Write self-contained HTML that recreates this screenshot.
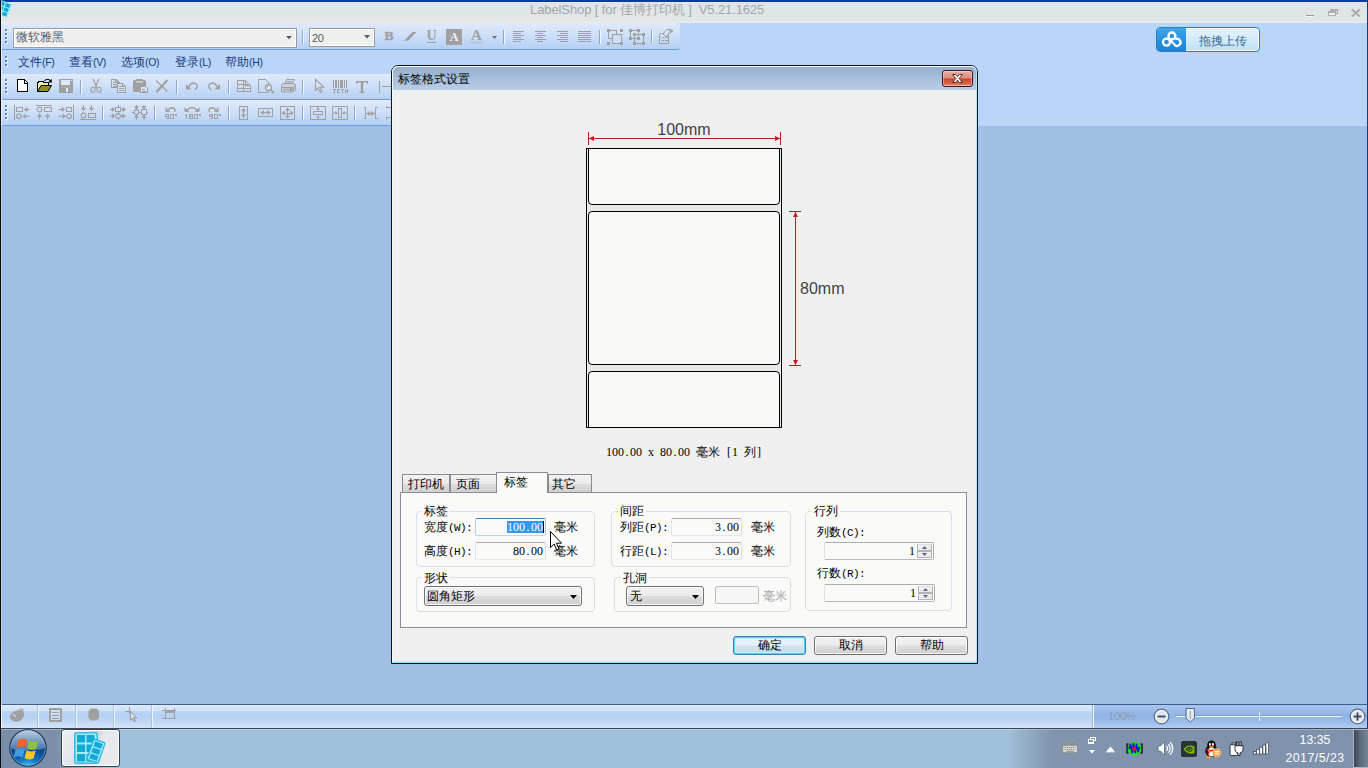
<!DOCTYPE html>
<html><head><meta charset="utf-8"><title>LabelShop</title>
<style>
*{box-sizing:border-box;margin:0;padding:0}
html,body{width:1368px;height:768px;overflow:hidden}
body{position:relative;background:#a0bee6;font-family:"Liberation Sans",sans-serif;font-size:12px;color:#000}
.abs{position:absolute}
svg{position:absolute;overflow:visible}
/* app frame */
#topline{left:0;top:0;width:1368px;height:2px;background:#0b3c98}
#titlebar{left:0;top:2px;width:1368px;height:21px;background:linear-gradient(#e4ecf6 0,#dfe4e9 6%,#e0e5e8 50%,#e3e7e6 92%,#eaeef1 100%)}
#title{left:530px;top:2px;width:240px;height:16px;line-height:15px;font-size:13px;letter-spacing:-.1px;color:#a3a7ab;white-space:nowrap}
#dock{left:0;top:23px;width:1368px;height:103px;background:#b9d6f8}
#lborder{left:0;top:0;width:1px;height:768px;background:#0c0e14}
#lborder2{left:1px;top:2px;width:1px;height:726px;background:linear-gradient(rgba(255,255,255,.6) 0,rgba(255,255,255,.6) 124px,rgba(255,255,255,.22) 124px,rgba(255,255,255,.22) 702px,rgba(255,255,255,.8) 702px)}
#rborder{left:1367px;top:0;width:1px;height:728px;background:#1d3d70}
.tb{position:absolute;left:2px;height:26px;background:linear-gradient(#dfeafa,#cfe0f8 45%,#b5d0f5);border-bottom:1px solid #6f9fe0}
.grip{position:absolute;left:3px;width:3px;height:15px}
.grip i{position:absolute;left:0;width:2px;height:2px;background:#5b79ad;box-shadow:1px 1px 0 #fff}
.sep{position:absolute;width:2px;height:16px;border-left:1px solid #8aa6cf;border-right:1px solid #f4f8fe}
/* status bar */
#status{left:0;top:704px;width:1368px;height:24px;border-top:1px solid #3f5c8c;background:linear-gradient(#ebf4fd 0,#d7e6fa 6%,#d0e2f9 24%,#b9d4f5 29%,#b5d1f3 50%,#c3d9f5 75%,#d4e4f8 100%)}
#statusR{left:1094px;top:705px;width:273px;height:23px;background:linear-gradient(#a9c7f0 0,#8fb3e6 45%,#9dbdec 75%,#b2cdf2)}
/* taskbar */
#taskbar{left:0;top:728px;width:1368px;height:40px;border-top:1px solid #39465a;background:linear-gradient(90deg,#798da7 0,#7b8fa9 55px,#a0bfd8 100px,#a0bfd8 1009px,#8094ad 1051px,#7e92ac 1368px)}
/* dialog */
#dlg{left:391px;top:65px;width:587px;height:599px;background:#f0f0f0;border:1px solid #0c1620;border-radius:7px 7px 0 0}
.t12{font-size:12px;line-height:14px;white-space:nowrap;position:absolute}

.tab{top:474px;height:19px;border:1px solid #898c95;border-bottom:none;background:linear-gradient(#f2f2f2,#ebebeb 48%,#dddddd 52%,#cfcfcf)}
.gb{border:1px solid #d5dfe5;border-radius:4px}
.gl{background:#fafbf9;padding:0 2px}
.mn{font-family:"Liberation Mono",monospace;font-size:11px;letter-spacing:-.6px}
.nm{font-family:"Liberation Serif",serif;font-size:12px}
.nm i{display:inline-block;width:6px;text-align:center;font-style:normal}
.nm b{display:inline-block;width:6px;text-align:center;font-weight:normal}
.cj{font-family:"Liberation Sans",sans-serif}
.w2{display:inline-block;width:24px;white-space:nowrap}
.w1{display:inline-block;width:12px;white-space:nowrap}
.inp{border:1px solid;border-color:#abadb3 #dbdfe6 #e3e9ef #e2e3ea;border-radius:2px;background:#fafbf9}
.dd{border:1px solid #707070;border-radius:3px;background:linear-gradient(#f2f2f2,#ebebeb 48%,#dddddd 52%,#cfcfcf);box-shadow:inset 0 0 0 1px rgba(255,255,255,.8)}
.spin{width:15px;height:14px;border:1px solid #b3b6ba;border-top-color:#dcdee0;background:linear-gradient(#f3f3f3,#e7e7e7 45%,#efefef 55%,#e9e9e9)}
.spin b{position:absolute;left:0;top:5px;width:13px;height:2px;background:#b4b4b4}
.btn{width:73px;height:19px;border:1px solid #707070;border-radius:3px;background:linear-gradient(#f2f2f2,#ebebeb 48%,#dddddd 52%,#cfcfcf);box-shadow:inset 0 0 0 1px rgba(255,255,255,.8);text-align:center;line-height:17px;font-size:12px}

/*TBCSS*/
.gd{position:absolute;left:0;width:2px;height:2px;background:#6482b4;box-shadow:1px 1px 0 #f2f7fe}
.cb{border:1px solid #9b9b9b;background:#f0f0f0;box-shadow:inset 0 0 0 1px #fff}
.mi{color:#17397c;font-size:12px;letter-spacing:0}
.mi span{font-size:10.500px;letter-spacing:-.35px}
.mi b{font-weight:normal}
/*/TBCSS*/
</style></head>
<body>
<div class="abs" id="topline"></div>
<div class="abs" id="titlebar"></div>
<div class="abs" id="title">LabelShop [ for <span style="display:inline-block;width:64.500px">佳博打印机</span> ]&nbsp; V5.21.1625</div>
<div class="abs" id="dock"></div>
<!--FONTBAR-->
<div class="tb" style="top:23px;width:678px;height:27px;border-radius:0 3px 3px 0"></div>
<div class="abs" style="left:5px;top:29px;width:3px;height:15px"><i class="gd" style="top:0px"></i><i class="gd" style="top:4px"></i><i class="gd" style="top:8px"></i><i class="gd" style="top:12px"></i></div>
<div class="abs cb" style="left:13px;top:28px;width:284px;height:20px"></div>
<div class="t12" style="left:16px;top:30px;color:#5e5e5e;font-size:12px">微软雅黑</div>
<svg style="left:286px;top:36px" width="6" height="4" viewBox="0 0 6 4" ><path d="M0 0h6l-3 3.300z" fill="#5c5c5c"/></svg>
<div class="sep" style="left:302px;top:30px;height:14px"></div>
<div class="abs cb" style="left:309px;top:28px;width:66px;height:19px"></div>
<div class="t12" style="left:312px;top:31px;color:#5a5a5a;font-size:11px;letter-spacing:-.3px">20</div>
<svg style="left:364px;top:35px" width="6" height="4" viewBox="0 0 6 4" ><path d="M0 0h6l-3 3.500z" fill="#5c5c5c"/></svg>
<div class="abs" style="left:384.500px;top:28px;width:12px;height:16px;font-family:'Liberation Serif',serif;font-weight:bold;font-size:13.500px;line-height:16px;color:#a0a0a0;-webkit-text-stroke:.5px #a0a0a0">B</div>
<svg style="left:401px;top:28px" width="16" height="16" viewBox="0 0 16 16" ><path d="M3 12.700h4.200l8-8.500v-.2h-3.700z" fill="#a0a0a0"/></svg>
<div class="abs" style="left:426.500px;top:28px;width:12px;height:16px;font-family:'Liberation Serif',serif;font-weight:bold;font-size:14px;line-height:16px;color:#a0a0a0">U</div>
<div class="abs" style="left:427px;top:42px;width:9px;height:1px;background:#a0a0a0"></div>
<div class="abs" style="left:446px;top:29px;width:16px;height:16px;background:#a0a0a0"></div>
<div class="abs" style="left:446px;top:30px;width:16px;height:14px;text-align:center;font-family:'Liberation Serif',serif;font-weight:bold;font-size:12px;line-height:14px;color:#eef3fb">A</div>
<div class="abs" style="left:468px;top:26px;width:17px;height:18px;text-align:center;font-family:'Liberation Serif',serif;font-weight:bold;font-size:15px;line-height:18px;color:#a0a0a0">A</div>
<div class="abs" style="left:470px;top:41px;width:13px;height:3px;background:linear-gradient(#b9c6da,#bccce4);border-radius:1px"></div>
<svg style="left:492px;top:36px" width="5" height="3" viewBox="0 0 5 3" ><path d="M0 0h5l-2.500 3z" fill="#707070"/></svg>
<div class="sep" style="left:503px;top:30px;height:14px"></div>
<svg style="left:513px;top:31px" width="13" height="12" viewBox="0 0 13 12" shape-rendering="crispEdges"><rect x="0" y="0" width="11" height="1" fill="#a0a0a0"/><rect x="0" y="2" width="8" height="1" fill="#a0a0a0"/><rect x="0" y="4" width="11" height="1" fill="#a0a0a0"/><rect x="0" y="6" width="8" height="1" fill="#a0a0a0"/><rect x="0" y="8" width="11" height="1" fill="#a0a0a0"/><rect x="0" y="10" width="8" height="1" fill="#a0a0a0"/></svg>
<svg style="left:535px;top:31px" width="13" height="12" viewBox="0 0 13 12" shape-rendering="crispEdges"><rect x="0" y="0" width="11" height="1" fill="#a0a0a0"/><rect x="2" y="2" width="6" height="1" fill="#a0a0a0"/><rect x="0" y="4" width="11" height="1" fill="#a0a0a0"/><rect x="2" y="6" width="6" height="1" fill="#a0a0a0"/><rect x="0" y="8" width="11" height="1" fill="#a0a0a0"/><rect x="2" y="10" width="6" height="1" fill="#a0a0a0"/></svg>
<svg style="left:557px;top:31px" width="13" height="12" viewBox="0 0 13 12" shape-rendering="crispEdges"><rect x="0" y="0" width="11" height="1" fill="#a0a0a0"/><rect x="3" y="2" width="8" height="1" fill="#a0a0a0"/><rect x="0" y="4" width="11" height="1" fill="#a0a0a0"/><rect x="3" y="6" width="8" height="1" fill="#a0a0a0"/><rect x="0" y="8" width="11" height="1" fill="#a0a0a0"/><rect x="3" y="10" width="8" height="1" fill="#a0a0a0"/></svg>
<svg style="left:578px;top:31px" width="13" height="12" viewBox="0 0 13 12" shape-rendering="crispEdges"><rect x="0" y="0" width="13" height="1" fill="#a0a0a0"/><rect x="0" y="2" width="13" height="1" fill="#a0a0a0"/><rect x="0" y="4" width="13" height="1" fill="#a0a0a0"/><rect x="0" y="6" width="13" height="1" fill="#a0a0a0"/><rect x="0" y="8" width="13" height="1" fill="#a0a0a0"/><rect x="0" y="10" width="13" height="1" fill="#a0a0a0"/></svg>
<div class="sep" style="left:599px;top:30px;height:14px"></div>
<svg style="left:607px;top:29px" width="16" height="16" viewBox="0 0 16 16" ><g fill="none" stroke="#a0a0a0" stroke-width="1" shape-rendering="crispEdges"><path d="M1.500 1.500h8v8h-8z"/><path d="M5.500 5.500h9v9h-9z" fill="#cddef6"/></g><rect x="0" y="0" width="3" height="3" fill="#a0a0a0"/><rect x="13" y="0" width="3" height="3" fill="#a0a0a0"/><rect x="0" y="13" width="3" height="3" fill="#a0a0a0"/><rect x="13" y="13" width="3" height="3" fill="#a0a0a0"/><rect x="2" y="2" width="7" height="7" fill="none"/></svg>
<svg style="left:629px;top:29px" width="16" height="16" viewBox="0 0 16 16" ><g fill="none" stroke="#a0a0a0" stroke-width="1" shape-rendering="crispEdges"><path d="M1.500 1.500h8v8h-8zM5.500 5.500h9v9h-9z"/></g><rect x="0" y="0" width="3" height="3" fill="#a0a0a0"/><rect x="8" y="0" width="3" height="3" fill="#a0a0a0"/><rect x="0" y="8" width="3" height="3" fill="#a0a0a0"/><rect x="4" y="4" width="3" height="3" fill="#a0a0a0"/><rect x="13" y="4" width="3" height="3" fill="#a0a0a0"/><rect x="4" y="13" width="3" height="3" fill="#a0a0a0"/><rect x="13" y="13" width="3" height="3" fill="#a0a0a0"/><rect x="8" y="8" width="3" height="3" fill="#a0a0a0"/></svg>
<div class="sep" style="left:651px;top:30px;height:14px"></div>
<svg style="left:658px;top:28px" width="16" height="16" viewBox="0 0 16 16" ><g fill="none" stroke="#a0a0a0" stroke-width="1" shape-rendering="crispEdges"><path d="M1.500 5.500h4M9.500 5.500h1v10h-9v-10M3.500 9.500h2M6.500 9.500h3M3.500 12.500h2M6.500 12.500h3"/></g><path d="M5 6l4-4.500 3 0 .0 3-4 4.500z" fill="none" stroke="#a0a0a0"/><path d="M12 .5l3.500 2.500-3.500 2.500z" fill="#a0a0a0"/></svg>
<!--/FONTBAR-->
<!--MENUBAR-->
<div class="abs" style="left:5px;top:56px;width:3px;height:11px"><i class="gd" style="top:0px"></i><i class="gd" style="top:4px"></i><i class="gd" style="top:8px"></i></div>
<div class="t12 mi" style="left:18px;top:55px"><b class="w2">文件</b><span>(F)</span></div>
<div class="t12 mi" style="left:69px;top:55px"><b class="w2">查看</b><span>(V)</span></div>
<div class="t12 mi" style="left:121px;top:55px"><b class="w2">选项</b><span>(O)</span></div>
<div class="t12 mi" style="left:175px;top:55px"><b class="w2">登录</b><span>(L)</span></div>
<div class="t12 mi" style="left:225px;top:55px"><b class="w2">帮助</b><span>(H)</span></div>
<!--/MENUBAR-->
<!--TOOLBAR1-->
<div class="tb" style="top:74px;width:700px"></div>
<div class="abs" style="left:5px;top:79px;width:3px;height:15px"><i class="gd" style="top:0px"></i><i class="gd" style="top:4px"></i><i class="gd" style="top:8px"></i><i class="gd" style="top:12px"></i></div>
<svg style="left:14px;top:78px" width="16" height="16" viewBox="0 0 16 16" ><path d="M3.500 1.500h7l3 3v9h-10z" fill="#fff" stroke="#000" shape-rendering="crispEdges"/><path d="M10.500 1.500v3.500h3.500" fill="none" stroke="#000" shape-rendering="crispEdges"/><path d="M10.500 1.500l3 3" stroke="#000" fill="none"/></svg>
<svg style="left:36px;top:78px" width="16" height="16" viewBox="0 0 16 16" ><path d="M1.500 13.500v-9.500h1l1-1h3l1 1h5v3.500" fill="#f4ef9c" stroke="#000" shape-rendering="crispEdges"/><path d="M1.500 13.500l3.500-6h10.500l-3.500 6z" fill="#8f8d20" stroke="#000" stroke-linejoin="round"/><path d="M8.500 3c1.500-2.300 4.500-2.300 5.800 0" fill="none" stroke="#000" stroke-width="1.100"/><path d="M15.800 .8v3.800h-3.800z" fill="#000"/></svg>
<svg style="left:58px;top:78px" width="16" height="16" viewBox="0 0 16 16" shape-rendering="crispEdges"><path d="M1 1h14v14h-14z" fill="#a0a0a0"/><rect x="3" y="2" width="9" height="5" fill="#dfe8f6"/><rect x="13" y="2" width="1" height="1" fill="#dfe8f6"/><rect x="8" y="10" width="2" height="4" fill="#dfe8f6"/><rect x="3" y="9" width="9" height="1" fill="#adadad"/></svg>
<div class="sep" style="left:80px;top:80px;height:14px"></div>
<svg style="left:88px;top:78px" width="16" height="16" viewBox="0 0 16 16" ><g fill="none" stroke="#a0a0a0" stroke-width="1.2"><path d="M5.200 1l3.800 9M10.800 1l-3.800 9" /></g><g fill="none" stroke="#a0a0a0" stroke-width="1.1"><ellipse cx="5" cy="11.800" rx="2" ry="2.500"/><ellipse cx="11" cy="11.800" rx="2" ry="2.500"/></g></svg>
<svg style="left:110px;top:78px" width="16" height="16" viewBox="0 0 16 16" ><g fill="none" stroke="#a0a0a0" stroke-width="1" shape-rendering="crispEdges"><path d="M1.500 1.500h4.500l3 3v5h-7.500z" fill="#d3e1f6"/><path d="M3 4.500h3M3 6.500h4M3 8.500h4"/><path d="M7.500 5.500h5l3 3v6h-8z" fill="#d3e1f6"/><path d="M9 8.500h3M9 10.500h5M9 12.500h5M5.500 1.500v3h3M12.500 5.500v3h3"/></g></svg>
<svg style="left:132px;top:78px" width="16" height="16" viewBox="0 0 16 16" ><rect x="1" y="2" width="13" height="12" rx="1.500" fill="#a0a0a0"/><rect x="4" y="1" width="7" height="2" rx=".8" fill="#a0a0a0"/><rect x="4" y="3.500" width="7" height="1" fill="#e6eefa"/><path d="M8.500 8.500h5l2 2v4h-7z" fill="#dbe6f7" stroke="#a0a0a0" shape-rendering="crispEdges"/><path d="M10 11.500h3M10 13.500h4" stroke="#a0a0a0" shape-rendering="crispEdges"/></svg>
<svg style="left:154px;top:78px" width="16" height="16" viewBox="0 0 16 16" ><path d="M2 2.500l11.500 11" stroke="#a0a0a0" stroke-width="1.200"/><path d="M13.500 2l-11 12" stroke="#a0a0a0" stroke-width="2.300"/></svg>
<div class="sep" style="left:176px;top:80px;height:14px"></div>
<svg style="left:184px;top:78px" width="16" height="16" viewBox="0 0 16 16" ><path d="M2 6v5.500h5.500z" fill="#a0a0a0"/><path d="M4.800 8.800c1.600-3 4.300-4.400 6.800-3.200c2.400 1.400 2 4.600-.9 6.200" fill="none" stroke="#a0a0a0" stroke-width="1.400"/></svg>
<svg style="left:206px;top:78px" width="16" height="16" viewBox="0 0 16 16" ><g transform="translate(16,0) scale(-1,1)"><path d="M2 6v5.500h5.500z" fill="#a0a0a0"/><path d="M4.800 8.800c1.600-3 4.300-4.400 6.800-3.200c2.400 1.400 2 4.600-.9 6.200" fill="none" stroke="#a0a0a0" stroke-width="1.400"/></g></svg>
<div class="sep" style="left:228px;top:80px;height:14px"></div>
<svg style="left:236px;top:78px" width="16" height="16" viewBox="0 0 16 16" ><g fill="none" stroke="#a0a0a0" stroke-width="1" shape-rendering="crispEdges"><path d="M1.500 2.500h8l5 5v6h-13zM7.500 2.500v11M1.500 6.500h10M1.500 10.500h13"/></g><g fill="none" stroke="#a0a0a0" stroke-width="1" shape-rendering="crispEdges"><path d="M9.500 2.500v5h5" /></g></svg>
<svg style="left:258px;top:78px" width="16" height="16" viewBox="0 0 16 16" ><g fill="none" stroke="#a0a0a0" stroke-width="1" shape-rendering="crispEdges"><path d="M7.500 1.500h-7v13h10v-2"/><path d="M7.500 1.500l3 3v2"/></g><circle cx="10.500" cy="9.500" r="3" fill="#dbe6f7" stroke="#a0a0a0" stroke-width="1.300"/><path d="M9 9.500a1.500 1.500 0 0 1 1.500-1.500" stroke="#a0a0a0" fill="none"/><path d="M12.800 11.800l3.200 3.400" stroke="#a0a0a0" stroke-width="1.800"/></svg>
<svg style="left:280px;top:78px" width="16" height="16" viewBox="0 0 16 16" ><g fill="none" stroke="#a0a0a0" stroke-width="1"><path d="M4.500 5.500l2-4h8l-2 4"/><path d="M6.500 3.500h6M6 5h5.500" /><path d="M1.500 7.500c0-1 1-2 2.500-2h9c1.500 0 2.500 1 2.500 2v4.500l-2 2h-12z" fill="#c4d3ea"/><path d="M1.500 9.500h12v4M13.500 9.500l2-2"/><path d="M3 11.500h6" stroke-width="1.500"/><rect x="10" y="10.500" width="2" height="2" fill="#a0a0a0"/></g></svg>
<div class="sep" style="left:302px;top:80px;height:14px"></div>
<svg style="left:312px;top:78px" width="16" height="16" viewBox="0 0 16 16" ><path d="M3.500 1.200v11.300l2.800-2.500 2 4.200 1.700-.8-2-4.100h3.800z" fill="none" stroke="#a0a0a0" stroke-width="1.100" stroke-linejoin="miter"/></svg>
<svg style="left:332px;top:78px" width="16" height="16" viewBox="0 0 16 16" shape-rendering="crispEdges"><rect x="1" y="2" width="1" height="8" fill="#a0a0a0"/><rect x="3" y="2" width="2" height="8" fill="#a0a0a0"/><rect x="6" y="2" width="1" height="8" fill="#a0a0a0"/><rect x="8" y="2" width="3" height="8" fill="#a0a0a0"/><rect x="12" y="2" width="1" height="8" fill="#a0a0a0"/><rect x="14" y="2" width="1" height="8" fill="#a0a0a0"/><path d="M1 11.500h3M2.500 11.500v3M1 14.500h2" stroke="#a0a0a0" fill="none"/><path d="M5 11.500h3M5.500 11.500v3M5 14.500h3" stroke="#a0a0a0" fill="none"/><path d="M9 11.500h3M10.500 11.500v3.500" stroke="#a0a0a0" fill="none"/><path d="M13.500 11v4M15.500 11v4M13.500 13.500h2" stroke="#a0a0a0" fill="none"/></svg>
<svg style="left:354px;top:78px" width="16" height="16" viewBox="0 0 16 16" ><path d="M2 3h12v3h-.9l-.6-1.400h-3.300v9.300l1.600.4v.7h-5.600v-.7l1.600-.4v-9.300h-3.300l-.6 1.400h-.9z" fill="#a0a0a0"/></svg>
<svg style="left:376px;top:78px" width="20" height="16" viewBox="0 0 20 16" ><g fill="none" stroke="#a0a0a0" stroke-width="1" shape-rendering="crispEdges"><path d="M3.500 3v12M6 8.500h12"/></g></svg>
<!--/TOOLBAR1-->
<!--TOOLBAR2-->
<div class="tb" style="top:100px;width:700px"></div>
<div class="abs" style="left:5px;top:105px;width:3px;height:15px"><i class="gd" style="top:0px"></i><i class="gd" style="top:4px"></i><i class="gd" style="top:8px"></i><i class="gd" style="top:12px"></i></div>
<svg style="left:14px;top:104px" width="16" height="16" viewBox="0 0 16 16" ><g fill="none" stroke="#a0a0a0" stroke-width="1" shape-rendering="crispEdges"><path d="M.5 1v15M2.500 3.500h6v4h-6z"/></g><g fill="none" stroke="#a0a0a0" stroke-width="1.2"><circle cx="4.800" cy="12.300" r="2.300"/><path d="M11.5 5.5H15.5" stroke="#a0a0a0" stroke-width="1.100" fill="none"/><path d="M10 5.5l3.200-2.800v5.600z" fill="#a0a0a0" stroke="none"/><path d="M10.0 12.3H15.5" stroke="#a0a0a0" stroke-width="1.100" fill="none"/><path d="M8.5 12.3l3.200-2.800v5.600z" fill="#a0a0a0" stroke="none"/></g></svg>
<svg style="left:36px;top:104px" width="16" height="16" viewBox="0 0 16 16" ><g fill="none" stroke="#a0a0a0" stroke-width="1" shape-rendering="crispEdges"><path d="M0 1.500h16M8.500 3.500h7v4h-7z"/></g><g fill="none" stroke="#a0a0a0" stroke-width="1.2"><circle cx="3.500" cy="5.500" r="2.300"/><path d="M3.5 11.0V15.5" stroke="#a0a0a0" stroke-width="1.100" fill="none"/><path d="M3.5 9.5l-2.800 3.200h5.600z" fill="#a0a0a0" stroke="none"/><path d="M11.5 11.0V15.5" stroke="#a0a0a0" stroke-width="1.100" fill="none"/><path d="M11.5 9.5l-2.800 3.200h5.600z" fill="#a0a0a0" stroke="none"/></g></svg>
<svg style="left:58px;top:104px" width="16" height="16" viewBox="0 0 16 16" ><g fill="none" stroke="#a0a0a0" stroke-width="1" shape-rendering="crispEdges"><path d="M15.500 1v15M8.500 3.500h5v4h-5z"/></g><g fill="none" stroke="#a0a0a0" stroke-width="1.2"><circle cx="11.200" cy="12.300" r="2.300"/><path d="M0.5 5.5H5.5" stroke="#a0a0a0" stroke-width="1.100" fill="none"/><path d="M7 5.5l-3.200-2.800v5.600z" fill="#a0a0a0" stroke="none"/><path d="M0.5 12.3H6.5" stroke="#a0a0a0" stroke-width="1.100" fill="none"/><path d="M8 12.3l-3.200-2.800v5.600z" fill="#a0a0a0" stroke="none"/></g></svg>
<svg style="left:80px;top:104px" width="16" height="16" viewBox="0 0 16 16" ><g fill="none" stroke="#a0a0a0" stroke-width="1" shape-rendering="crispEdges"><path d="M0 15.500h16M8.500 9.500h7v4h-7z"/></g><g fill="none" stroke="#a0a0a0" stroke-width="1.2"><circle cx="3.500" cy="11.500" r="2.300"/><path d="M3.5 1V5.5" stroke="#a0a0a0" stroke-width="1.100" fill="none"/><path d="M3.5 7l-2.800-3.200h5.600z" fill="#a0a0a0" stroke="none"/><path d="M11.5 1V5.5" stroke="#a0a0a0" stroke-width="1.100" fill="none"/><path d="M11.5 7l-2.800-3.200h5.600z" fill="#a0a0a0" stroke="none"/></g></svg>
<div class="sep" style="left:102px;top:106px;height:14px"></div>
<svg style="left:110px;top:104px" width="16" height="16" viewBox="0 0 16 16" ><g fill="none" stroke="#a0a0a0" stroke-width="1" shape-rendering="crispEdges"><path d="M5.500 3.500h5v4h-5zM8 1v2.500M8 7.500v2.500M8 14.500v1.500"/></g><g fill="none" stroke="#a0a0a0" stroke-width="1.1"><circle cx="8" cy="12" r="2.400"/><path d="M0 5.5H3.5" stroke="#a0a0a0" stroke-width="1.100" fill="none"/><path d="M5 5.5l-3.200-2.800v5.600z" fill="#a0a0a0" stroke="none"/><path d="M12.5 5.5H16" stroke="#a0a0a0" stroke-width="1.100" fill="none"/><path d="M11 5.5l3.200-2.800v5.600z" fill="#a0a0a0" stroke="none"/><path d="M0 12H3.8" stroke="#a0a0a0" stroke-width="1.100" fill="none"/><path d="M5.3 12l-3.200-2.800v5.600z" fill="#a0a0a0" stroke="none"/><path d="M12.2 12H16" stroke="#a0a0a0" stroke-width="1.100" fill="none"/><path d="M10.7 12l3.200-2.800v5.600z" fill="#a0a0a0" stroke="none"/></g></svg>
<svg style="left:132px;top:104px" width="16" height="16" viewBox="0 0 16 16" ><g fill="none" stroke="#a0a0a0" stroke-width="1" shape-rendering="crispEdges"><path d="M9.500 5.500h5v5h-5zM0 8h2M7 8h2.500M14.500 8h1.500"/></g><g fill="none" stroke="#a0a0a0" stroke-width="1.1"><circle cx="4.500" cy="8" r="2.400"/><path d="M4.5 1V4.0" stroke="#a0a0a0" stroke-width="1.100" fill="none"/><path d="M4.5 5.5l-2.800-3.200h5.600z" fill="#a0a0a0" stroke="none"/><path d="M4.5 12.0V16" stroke="#a0a0a0" stroke-width="1.100" fill="none"/><path d="M4.5 10.5l-2.800 3.200h5.600z" fill="#a0a0a0" stroke="none"/><path d="M12 1V4.0" stroke="#a0a0a0" stroke-width="1.100" fill="none"/><path d="M12 5.5l-2.800-3.200h5.600z" fill="#a0a0a0" stroke="none"/><path d="M12 12.0V16" stroke="#a0a0a0" stroke-width="1.100" fill="none"/><path d="M12 10.5l-2.800 3.200h5.600z" fill="#a0a0a0" stroke="none"/></g></svg>
<div class="sep" style="left:154px;top:106px;height:14px"></div>
<svg style="left:162px;top:104px" width="16" height="16" viewBox="0 0 16 16" ><path d="M3.500 3v5h5z" fill="#a0a0a0"/><path d="M6.500 5.800c1.800-2.800 6.300-3 6.300 1v1.200" fill="none" stroke="#a0a0a0" stroke-width="1.500"/><g shape-rendering="crispEdges"><path transform="translate(3,10)" d="M3.500 .500h-3v2h3M.500 4.500h3v-4" fill="none" stroke="#a0a0a0" stroke-width="1"/><path transform="translate(8,10)" d="M.500 .500h3v4h-3z" fill="none" stroke="#a0a0a0" stroke-width="1"/><rect x="13" y="10" width="2" height="2" fill="#a0a0a0"/></g></svg>
<svg style="left:184px;top:104px" width="16" height="16" viewBox="0 0 16 16" ><path d="M.500 3v5h5zM15.500 3v5h-5z" fill="#a0a0a0"/><path d="M3.500 5.800c2.500-3.200 6.500-3.200 9 0" fill="none" stroke="#a0a0a0" stroke-width="1.500"/><g shape-rendering="crispEdges"><path transform="translate(0,10)" d="M2.500 0v5M1 1.500h1.500" fill="none" stroke="#a0a0a0" stroke-width="1"/><path transform="translate(5,10)" d="M.500 .500h3v4h-3zM.500 2.500h3" fill="none" stroke="#a0a0a0" stroke-width="1"/><path transform="translate(10,10)" d="M.500 .500h3v4h-3z" fill="none" stroke="#a0a0a0" stroke-width="1"/><rect x="15" y="10" width="2" height="2" fill="#a0a0a0"/></g></svg>
<svg style="left:206px;top:104px" width="16" height="16" viewBox="0 0 16 16" ><path d="M12.500 3v5h-5z" fill="#a0a0a0"/><path d="M9.500 5.800c-1.800-2.800-6.300-3-6.300 1v1.200" fill="none" stroke="#a0a0a0" stroke-width="1.500"/><g shape-rendering="crispEdges"><path transform="translate(3,10)" d="M3.500 .500h-3v2h3M.500 4.500h3v-4" fill="none" stroke="#a0a0a0" stroke-width="1"/><path transform="translate(8,10)" d="M.500 .500h3v4h-3z" fill="none" stroke="#a0a0a0" stroke-width="1"/><rect x="13" y="10" width="2" height="2" fill="#a0a0a0"/></g></svg>
<div class="sep" style="left:228px;top:106px;height:14px"></div>
<svg style="left:236px;top:104px" width="16" height="16" viewBox="0 0 16 16" ><g fill="none" stroke="#a0a0a0" stroke-width="1" shape-rendering="crispEdges"><path d="M3.500 2.500h8v13h-8z"/></g><g fill="none" stroke="#a0a0a0" stroke-width="1.1"><path d="M7.5 5.5V13.5" stroke="#a0a0a0" stroke-width="1.100" fill="none"/><path d="M7.5 4l-2.800 3.200h5.600z" fill="#a0a0a0" stroke="none"/><path d="M7.5 4V12.0" stroke="#a0a0a0" stroke-width="1.100" fill="none"/><path d="M7.5 13.5l-2.800-3.200h5.600z" fill="#a0a0a0" stroke="none"/></g></svg>
<svg style="left:258px;top:104px" width="16" height="16" viewBox="0 0 16 16" ><g fill="none" stroke="#a0a0a0" stroke-width="1" shape-rendering="crispEdges"><path d="M.500 4.500h14v8h-14z"/></g><g fill="none" stroke="#a0a0a0" stroke-width="1.1"><path d="M4.0 8.5H12.5" stroke="#a0a0a0" stroke-width="1.100" fill="none"/><path d="M2.5 8.5l3.200-2.800v5.600z" fill="#a0a0a0" stroke="none"/><path d="M2.5 8.5H11.0" stroke="#a0a0a0" stroke-width="1.100" fill="none"/><path d="M12.5 8.5l-3.200-2.800v5.600z" fill="#a0a0a0" stroke="none"/></g></svg>
<svg style="left:280px;top:104px" width="16" height="16" viewBox="0 0 16 16" ><g fill="none" stroke="#a0a0a0" stroke-width="1" shape-rendering="crispEdges"><path d="M.500 2.500h14v13h-14z"/></g><path d="M2.500 9h10M7.500 4v10" stroke="#a0a0a0" fill="none" shape-rendering="crispEdges"/><path d="M1.500 9l3-2.500v5zM13.500 9l-3-2.500v5zM7.500 3.500l-2.500 3h5zM7.500 14.500l-2.500-3h5z" fill="#a0a0a0"/></svg>
<div class="sep" style="left:302px;top:106px;height:14px"></div>
<svg style="left:310px;top:104px" width="16" height="16" viewBox="0 0 16 16" ><g fill="none" stroke="#a0a0a0" stroke-width="1" shape-rendering="crispEdges"><path d="M.500 2.500h15v13h-15zM3.500 7.500h9v3h-9z"/></g><path d="M8 3v3M8 12v3" stroke="#a0a0a0"/><path d="M8 6.800l-2-2.300h4zM8 11.200l-2 2.300h4z" fill="#a0a0a0"/></svg>
<svg style="left:332px;top:104px" width="16" height="16" viewBox="0 0 16 16" ><g fill="none" stroke="#a0a0a0" stroke-width="1" shape-rendering="crispEdges"><path d="M.500 2.500h15v13h-15zM6.500 4.500h3v9h-3z"/></g><path d="M1 9h4M11 9h4" stroke="#a0a0a0"/><path d="M5.800 9l-2.300-2v4zM10.200 9l2.300-2v4z" fill="#a0a0a0"/></svg>
<div class="sep" style="left:354px;top:106px;height:14px"></div>
<svg style="left:362px;top:104px" width="16" height="16" viewBox="0 0 16 16" ><g fill="none" stroke="#a0a0a0" stroke-width="1" shape-rendering="crispEdges"><path d="M1.500 3.500h2v11h-2M15.500 3.500h-2v11h2"/></g><g fill="none" stroke="#a0a0a0" stroke-width="1.3"><path d="M6.0 9.5H12.5" stroke="#a0a0a0" stroke-width="1.100" fill="none"/><path d="M4.5 9.5l3.200-2.800v5.600z" fill="#a0a0a0" stroke="none"/><path d="M4.5 9.5H11.0" stroke="#a0a0a0" stroke-width="1.100" fill="none"/><path d="M12.5 9.5l-3.200-2.800v5.600z" fill="#a0a0a0" stroke="none"/></g></svg>
<svg style="left:384px;top:104px" width="16" height="16" viewBox="0 0 16 16" ><g fill="none" stroke="#a0a0a0" stroke-width="1" shape-rendering="crispEdges"><path d="M2.500 1.500v2h10M2.500 15.500v-2h10"/></g></svg>
<!--/TOOLBAR2-->
<!--CLOUD-->
<svg style="left:1px;top:2px" width="13" height="16" viewBox="0 0 13 16" style="left:1px;top:2px;overflow:hidden"><g transform="translate(2.500,-1) rotate(20)"><rect x="-3" y="0" width="12.500" height="14.500" fill="#9befff"/><rect x="-2.5" y="1" width="4.500" height="3.600" fill="#17a7d3"/><rect x="-2.5" y="5.6" width="4.500" height="3.600" fill="#17a7d3"/><rect x="-2.5" y="10.2" width="4.500" height="3.600" fill="#17a7d3"/><rect x="3.2" y="1" width="4.500" height="3.600" fill="#17a7d3"/><rect x="3.2" y="5.6" width="4.500" height="3.600" fill="#17a7d3"/><rect x="3.2" y="10.2" width="4.500" height="3.600" fill="#17a7d3"/></g></svg>
<div class="abs" style="left:1306px;top:15px;width:8px;height:1px;background:#9f9f9f;box-shadow:0 1px 0 #f4f6f6"></div>
<svg style="left:1328px;top:9px" width="10" height="8" viewBox="0 0 10 8" ><g shape-rendering="crispEdges"><path d="M2.500 2.500v-2h7v4h-2" fill="none" stroke="#adadad"/><rect x="2" y="0" width="8" height="2" fill="#adadad"/><rect x=".500" y="2.500" width="7" height="4" fill="#eef1f2" stroke="#adadad"/><rect x="0" y="2" width="8" height="2" fill="#adadad"/></g></svg>
<svg style="left:1351px;top:9px" width="10" height="8" viewBox="0 0 10 8" ><path d="M.7 .5l8 7M8.700 .5l-8 7" stroke="#a9a9a9" stroke-width="1.700" fill="none"/></svg>
<div class="abs" style="left:1156px;top:27px;width:104px;height:25px;border:1px solid #2e7dbe;border-radius:4px;background:linear-gradient(#e6f3fb,#d3ebf8 50%,#bcdff4);box-shadow:inset 0 0 0 1px rgba(255,255,255,.75)"></div>
<div class="abs" style="left:1157px;top:28px;width:29px;height:23px;border-radius:3px 0 0 3px;background:linear-gradient(#41a6ea,#2a93e0 50%,#1c84d6)"></div>
<svg style="left:1160px;top:30px" width="24" height="20" viewBox="0 0 24 20" ><g fill="none" stroke="#fff" stroke-width="2.300"><circle cx="11.900" cy="6" r="3.500"/><circle cx="6.500" cy="12.100" r="3.500"/><path d="M15.300 9.300a3.500 3.500 0 1 1 -.9 5.400"/><path d="M9.300 9.600l5.600 5.200" stroke-width="2.100"/></g></svg>
<div class="t12" style="left:1199px;top:34px;color:#3d6b95;font-size:12px">拖拽上传</div>
<!--/CLOUD-->
<div class="abs" id="status"></div>
<div class="abs" id="statusR"></div>
<!--STATUSITEMS-->
<div class="abs" style="left:37px;top:705px;width:2px;height:23px;border-left:1px solid #a9c3ea;border-right:1px solid #eef5fd"></div>
<div class="abs" style="left:75px;top:705px;width:2px;height:23px;border-left:1px solid #a9c3ea;border-right:1px solid #eef5fd"></div>
<div class="abs" style="left:113px;top:705px;width:2px;height:23px;border-left:1px solid #a9c3ea;border-right:1px solid #eef5fd"></div>
<div class="abs" style="left:151px;top:705px;width:2px;height:23px;border-left:1px solid #a9c3ea;border-right:1px solid #eef5fd"></div>
<div class="abs" style="left:1093px;top:705px;width:1px;height:23px;background:#f2f7fe"></div>
<div class="abs" style="left:1092px;top:705px;width:1px;height:23px;background:#9db9e4"></div>
<svg style="left:9px;top:707px" width="17" height="16" viewBox="0 0 17 16" ><path d="M1 9c0-2 2-4 5-5l3-1c1-1.500 3-2 4.500-1.500 1.500.7 1.500 2 .5 3 1.500 1.500 1.500 4 0 6-1 2-3 3.500-5 4-3 .500-6-.500-7.500-2.500-.500-1-.500-2-.500-3z" fill="#a0a0a0"/><path d="M3.500 7l3.500 2.500M9.500 3.500c1-1 3-1.500 4-.500" stroke="#c5d8f3" stroke-width="1.200" fill="none"/></svg>
<svg style="left:49px;top:708px" width="13" height="14" viewBox="0 0 13 14" shape-rendering="crispEdges"><rect x="0" y="0" width="13" height="14" fill="#a0a0a0"/><rect x="2" y="2" width="9" height="10" fill="#c9dcf5"/><path d="M3 4.500h7M3 7.500h7M3 10.500h7" stroke="#a0a0a0" stroke-width="1.300"/></svg>
<svg style="left:88px;top:708px" width="11" height="13" viewBox="0 0 11 13" ><path d="M3 .5h5.500l2.500 2.500v7l-2.500 2.500h-5.500l-2.500-2.500v-7z" fill="#a0a0a0"/></svg>
<svg style="left:125px;top:707px" width="13" height="16" viewBox="0 0 13 16" ><path d="M4.500 0v7M0 4.500h4" stroke="#a0a0a0" fill="none" shape-rendering="crispEdges"/><path d="M5.500 4.500v8.500l2-1.700 1.500 3.200 1.300-.6-1.500-3.200h2.700z" fill="#dfe9f8" stroke="#a0a0a0" stroke-width="1.100"/></svg>
<svg style="left:162px;top:708px" width="14" height="12" viewBox="0 0 14 12" ><path d="M0 2.500h14M0 10.500h14M3.500 0v11M12.500 0v11M2.500 4.500h10" stroke="#a0a0a0" fill="none" shape-rendering="crispEdges"/><path d="M2.500 2.500h10" stroke="#a0a0a0" stroke-width="2" shape-rendering="crispEdges"/></svg>
<div class="t12" style="left:1108px;top:709px;color:#8c9db8;font-size:11.500px;letter-spacing:-.45px">100%</div>
<svg style="left:1152.5px;top:707.5px" width="17" height="17" viewBox="0 0 17 17" ><circle cx="8.500" cy="8.500" r="7.300" fill="#dfe7f2" stroke="#5e6e88" stroke-width="1.200"/><circle cx="8.500" cy="8.500" r="5.900" fill="none" stroke="#fff" stroke-width=".9" opacity=".8"/><path d="M4.500 8.500h8" stroke="#3c4659" stroke-width="1.800"/></svg>
<svg style="left:1348.5px;top:707.5px" width="17" height="17" viewBox="0 0 17 17" ><circle cx="8.500" cy="8.500" r="7.300" fill="#dfe7f2" stroke="#5e6e88" stroke-width="1.200"/><circle cx="8.500" cy="8.500" r="5.900" fill="none" stroke="#fff" stroke-width=".9" opacity=".8"/><path d="M4.500 8.500h8" stroke="#3c4659" stroke-width="1.800"/><path d="M8.500 4.500v8" stroke="#3c4659" stroke-width="1.800"/></svg>
<div class="abs" style="left:1176px;top:716px;width:166px;height:1px;background:#f1f6fd"></div>
<div class="abs" style="left:1176px;top:715px;width:166px;height:1px;background:#7f9fd2"></div>
<div class="abs" style="left:1259px;top:712px;width:1px;height:9px;background:#f1f6fd"></div>
<svg style="left:1185px;top:708px" width="11" height="15" viewBox="0 0 11 15" ><path d="M1 .5h8.500v9.500l-4.250 4.200-4.250-4.200z" fill="#e2eaf5" stroke="#56647c" stroke-width="1"/><path d="M5.250 3v8" stroke="#8d9bb3"/></svg>
<!--/STATUSITEMS-->
<div class="abs" id="lborder"></div><div class="abs" id="lborder2"></div><div class="abs" id="rborder"></div>
<div class="abs" id="taskbar"></div>
<!--TASKITEMS-->
<div class="abs" style="left:0;top:729px;width:1368px;height:1px;background:rgba(255,255,255,.28)"></div>
<svg style="left:9px;top:729px" width="38" height="38" viewBox="0 0 38 38" ><defs>
<radialGradient id="og" cx="50%" cy="105%" r="75%"><stop offset="0" stop-color="#48d6f5"/><stop offset=".35" stop-color="#1278c4"/><stop offset=".75" stop-color="#0b4b93"/><stop offset="1" stop-color="#18457c"/></radialGradient>
<linearGradient id="oh" x1="0" y1="0" x2="0" y2="1"><stop offset="0" stop-color="#c7d8ea" stop-opacity=".95"/><stop offset="1" stop-color="#6f9bc6" stop-opacity=".55"/></linearGradient>
</defs>
<circle cx="19" cy="19" r="18.200" fill="url(#og)" stroke="#16365f" stroke-width="1.200"/>
<path d="M1.800 18.500a17.200 17.200 0 0 1 34.400 0c-6 3.500-12 1-17.200 2.500s-12 2-17.200-2.500z" fill="url(#oh)"/>
<circle cx="19" cy="19" r="17.300" fill="none" stroke="#9fc3e6" stroke-width=".8" opacity=".7"/>
<g transform="translate(19.500,19.300) scale(1.220)">
<path d="M-8.500-6.500c2.500-1.500 5-1.700 7.500-.3l-1.600 6.400c-2.400-1.400-5-1.300-7.500.2z" fill="#f0642a"/>
<path d="M.5-6.300c2.500 1.400 5 1.500 7.600 0l-1.700 6.500c-2.600 1.400-5 1.300-7.500-.2z" fill="#8fc13e"/>
<path d="M-10.600 1.300c2.500-1.500 5-1.600 7.500-.2l-1.700 6.500c-2.400-1.400-5-1.300-7.500.2z" fill="#3f9de0"/>
<path d="M-1.600 1.600c2.500 1.400 5 1.500 7.500 0l-1.700 6.500c-2.500 1.400-5 1.300-7.500-.1z" fill="#fbc62c"/>
</g></svg>
<div class="abs" style="left:61px;top:729px;width:59px;height:38px;border:1px solid #39414d;border-radius:3px;background:linear-gradient(115deg,#eef1f4 0,#e2e6ea 30%,#cfd5db 48%,#e4e8ec 62%,#e9edf0 100%);box-shadow:inset 0 0 0 1px rgba(255,255,255,.85)"></div>
<svg style="left:74px;top:732px" width="34" height="34" viewBox="0 0 34 34" ><rect x=".8" y=".8" width="22.400" height="30.400" rx="1.500" fill="#a3ecfb" stroke="#1db3e0" stroke-width="1.300"/><rect x="3" y="3" width="8" height="7.500" fill="#12a8d8"/><rect x="3" y="12.5" width="8" height="7.500" fill="#12a8d8"/><rect x="3" y="22" width="8" height="7.500" fill="#12a8d8"/><rect x="12.5" y="3" width="8" height="7.500" fill="#12a8d8"/><rect x="12.5" y="12.5" width="8" height="7.500" fill="#12a8d8"/><rect x="12.5" y="22" width="8" height="7.500" fill="#12a8d8"/><g transform="translate(19.800,7) rotate(19)"><rect x="0" y="0" width="12" height="21.500" rx="1" fill="#a3ecfb" stroke="#1db3e0" stroke-width="1.200"/><rect x="2" y="1.800" width="8" height="5.200" fill="#12a8d8"/><rect x="2" y="8.200" width="8" height="5.200" fill="#12a8d8"/><rect x="2" y="14.600" width="8" height="5.200" fill="#12a8d8"/></g></svg>
<svg style="left:1062px;top:738px" width="17" height="16" viewBox="0 0 17 16" ><path d="M4 7c0-3 3-1.500 5-3s2.500-2.500 5-3" fill="none" stroke="#9a9c98" stroke-width="1.100"/><rect x=".6" y="7.200" width="15" height="7.600" rx="1.300" fill="#d7d6cd" stroke="#8b8d8b" stroke-width="1.100"/><path d="M2.500 9.500h11M2.500 11.500h11" stroke="#8d8f8d" stroke-dasharray="1.300 .8"/><path d="M4.500 13.300h7" stroke="#8d8f8d"/></svg>
<svg style="left:1088px;top:737px" width="8" height="7" viewBox="0 0 8 7" ><g fill="none" stroke="#fff" stroke-width="1.200" shape-rendering="crispEdges"><path d="M2.500 2.500v-2h5v3h-2"/><rect x=".500" y="2.500" width="5" height="3.500"/></g></svg>
<svg style="left:1089px;top:750px" width="6" height="4" viewBox="0 0 6 4" ><path d="M0 0h6l-3 3.500z" fill="#fff"/></svg>
<svg style="left:1106px;top:746px" width="9" height="7" viewBox="0 0 9 7" ><path d="M0 6l4.500-5.500 4.500 5.500z" fill="#fff"/><path d="M0 6h9" stroke="#d0dbe8" stroke-width="1"/></svg>
<svg style="left:1126px;top:741px" width="17" height="15" viewBox="0 0 17 15" ><ellipse cx="8.500" cy="7.500" rx="7" ry="6.800" fill="#13e216"/><path d="M2.500 3h-1.500v9h1.500M14.500 3h1.500v9h-1.500" fill="none" stroke="#000" stroke-width="1.200"/><path d="M3 8l1.500-5 1.500 9 1.500-10 1.500 10 1.500-9 1.500 8 1.500-5" fill="none" stroke="#1414e6" stroke-width="1.600"/><path d="M6.500 6l1 5 1.500-6 1 5" fill="none" stroke="#f0142a" stroke-width="1.200"/></svg>
<svg style="left:1157px;top:741px" width="17" height="15" viewBox="0 0 17 15" ><path d="M1 5h2.500l4-4.300v13.600l-4-4.300h-2.500z" fill="#fff" stroke="#5c6573" stroke-width=".8"/><path d="M9.500 5.200a3 3 0 0 1 0 4.600M11.200 3.200a5.600 5.600 0 0 1 0 8.600M13 1.300a8.300 8.300 0 0 1 0 12.400" fill="none" stroke="#fff" stroke-width="1.300"/></svg>
<svg style="left:1181px;top:741px" width="16" height="16" viewBox="0 0 16 16" ><rect x="0" y="0" width="16" height="16" rx="2" fill="#2c3138"/><path d="M2.500 8.300c2-3.300 5.500-4.500 9.500-3.300l1.500 .8v6.500c-4 1.200-8 .3-11-4z" fill="#76b900"/><path d="M5 8.300c1.500-1.800 3.500-2.300 5.500-1.500 1 1 .8 2.500-.5 3.200-1.500.5-3.500-.2-5-1.700z" fill="none" stroke="#2c3138" stroke-width="1.100"/><circle cx="8.300" cy="8.300" r="1" fill="#2c3138"/></svg>
<svg style="left:1204px;top:740px" width="18" height="18" viewBox="0 0 18 18" ><ellipse cx="7.500" cy="11" rx="6.300" ry="6" fill="#0c0c0c"/><ellipse cx="7.500" cy="5" rx="4.300" ry="4.600" fill="#0c0c0c"/><ellipse cx="7.500" cy="12" rx="3.600" ry="4.400" fill="#fff"/><ellipse cx="6" cy="4.200" rx="1" ry="1.500" fill="#fff"/><ellipse cx="9" cy="4.200" rx="1" ry="1.500" fill="#fff"/><ellipse cx="7.500" cy="6.800" rx="2.300" ry=".9" fill="#f5a41c"/><path d="M2.800 8.600c3 1.600 6.500 1.600 9.500 0l.4 1.700c-3.300 1.700-7 1.700-10.300 0zM4.300 10.200l-1 4 1.800 .3.900-3.800z" fill="#e0201c"/><ellipse cx="4.500" cy="17.200" rx="2.600" ry="1" fill="#f5a41c"/><circle cx="12.800" cy="12.800" r="4.300" fill="#f5a04a" stroke="#f7c28e" stroke-width=".6"/><path d="M10.600 11.700h4.400M10.600 13.900h4.400" stroke="#fff" stroke-width="1.200"/></svg>
<svg style="left:1229px;top:741px" width="15" height="16" viewBox="0 0 15 16" ><g stroke="#2e3642" stroke-width="1" fill="#fff"><rect x="1" y="3.500" width="7.500" height="11" rx="1"/><rect x="3" y="2" width="3.500" height="1.800"/><path d="M6 4.500h8v4.500c0 1.500-1.500 2.800-3 2.800v2.700h-2v-2.700c-1.500 0-3-1.300-3-2.800z"/><rect x="7.500" y=".8" width="1.600" height="4"/><rect x="11" y=".8" width="1.600" height="4"/></g></svg>
<svg style="left:1253px;top:742px" width="17" height="13" viewBox="0 0 17 13" ><rect x="0.6" y="9.6" width="2.600" height="2.4" fill="#fff" stroke="#39424f" stroke-width=".7"/><rect x="3.7" y="7.3999999999999995" width="2.600" height="4.6" fill="#fff" stroke="#39424f" stroke-width=".7"/><rect x="6.8" y="5.199999999999999" width="2.600" height="6.800000000000001" fill="#fff" stroke="#39424f" stroke-width=".7"/><rect x="9.9" y="2.999999999999999" width="2.600" height="9.0" fill="#fff" stroke="#39424f" stroke-width=".7"/><rect x="13.0" y="0.7999999999999989" width="2.600" height="11.200000000000001" fill="#fff" stroke="#39424f" stroke-width=".7"/></svg>
<div class="abs" style="left:1284px;top:733px;width:62px;height:15px;line-height:15px;text-align:center;color:#fff;font-size:12.300px">13:35</div>
<div class="abs" style="left:1280px;top:751px;width:70px;height:15px;line-height:15px;text-align:center;color:#fff;font-size:12.300px;letter-spacing:.5px">2017/5/23</div>
<div class="abs" style="left:1353px;top:729px;width:15px;height:39px;border:1px solid #aab6c6;border-right:none;background:linear-gradient(90deg,#3c4856,#5d6b7c 45%,#76859a)"></div>
<!--/TASKITEMS-->
<div class="abs" id="lb3" style="left:0;top:728px;width:1px;height:40px;background:#0c0e14"></div>
<div class="abs" id="dlg"></div>
<!--DLG-->
<div class="abs" style="left:392px;top:66px;width:585px;height:597px;border:1px solid #f4fbff;border-right-color:#b5e6f5;border-bottom-color:#8edcf2;border-radius:6px 6px 0 0"></div>
<div class="abs" style="left:393px;top:67px;width:583px;height:23px;background:linear-gradient(#99aecb,#9bb7d3 25%,#a9c1dc 55%,#b6cee6);border-radius:5px 5px 0 0"></div>
<div class="abs" style="left:393px;top:661px;width:583px;height:1px;background:#d6f1f8"></div>
<div class="t12" style="left:398px;top:72px;color:#000">标签格式设置</div>
<!-- close button -->
<div class="abs" style="left:942px;top:70px;width:31px;height:17px;border:1px solid #46161c;border-radius:3px;background:linear-gradient(#e9b2a4 0,#dc8c7a 48%,#c64628 52%,#d4694e 85%,#e09a86);box-shadow:inset 0 0 0 1px rgba(255,255,255,.35)"></div>
<svg style="left:951px;top:73px" width="13" height="11" viewBox="0 0 13 11"><path d="M1.5 1.5h3l2 2.2 2-2.2h3l-3.4 4 3.4 4h-3l-2-2.3-2 2.3h-3l3.4-4z" fill="#fff" stroke="#5a2a2a" stroke-width="1" stroke-linejoin="round"/></svg>
<!-- preview -->
<div class="abs" style="left:586px;top:148px;width:196px;height:280px;background:#e9e9e9;border:1px solid #000"></div>
<div class="abs" style="left:588px;top:143px;width:192px;height:62px;background:#f9faf8;border:1px solid #000;border-radius:4px;clip-path:inset(5px 0 0 0)"></div>
<div class="abs" style="left:588px;top:211px;width:192px;height:154px;background:#f9faf8;border:1px solid #000;border-radius:4px"></div>
<div class="abs" style="left:588px;top:371px;width:192px;height:62px;background:#f9faf8;border:1px solid #000;border-radius:4px;clip-path:inset(0 0 5px 0)"></div>
<div class="abs" style="left:587px;top:148px;width:194px;height:1px;background:#000"></div>
<div class="abs" style="left:587px;top:427px;width:194px;height:1px;background:#000"></div>
<svg style="left:580px;top:120px" width="240" height="260" viewBox="580 120 240 260" shape-rendering="crispEdges">
 <g stroke="#c9141f" stroke-width="1" fill="none">
  <path d="M588.5 132v13M780.5 132v13M588 138.5h193"/>
  <path d="M789 211.5h12M789 365.5h12M795.5 211v155"/>
 </g>
 <g fill="#c9141f" shape-rendering="auto"><path d="M589 138.5l5-2.5v5zM780 138.5l-5-2.5v5zM795.5 212l-2.5 5h5zM795.5 365l-2.5-5h5z"/></g>
</svg>
<div class="abs" style="left:634px;top:121px;width:100px;height:18px;line-height:18px;text-align:center;font-size:16px;color:#3e4248">100mm</div>
<div class="abs" style="left:800px;top:280px;width:60px;height:18px;line-height:18px;font-size:16px;color:#3e4248">80mm</div>
<div class="t12 nm" style="left:606px;top:445px;word-spacing:3px">100<i>.</i>00 <b>x</b> 80<i>.</i>00 <span class="cj w2">毫米</span> <b>[</b>1 <span class="cj w1">列</span><b>]</b></div>
<!-- tabs -->
<div class="abs tab" style="left:402px;width:48px"></div><div class="t12" style="left:408px;top:477px">打印机</div>
<div class="abs tab" style="left:450px;width:47px"></div><div class="t12" style="left:456px;top:477px">页面</div>
<div class="abs tab" style="left:548px;width:44px"></div><div class="t12" style="left:552px;top:477px">其它</div>
<div class="abs" style="left:400px;top:492px;width:567px;height:136px;background:#fafbf9;border:1px solid #898c95"></div>
<div class="abs" style="left:496px;top:472px;width:52px;height:21px;background:#fafbf9;border:1px solid #898c95;border-bottom:none"></div>
<div class="t12" style="left:504px;top:475px">标签</div>
<!-- group boxes -->
<div class="abs gb" style="left:416px;top:511px;width:179px;height:56px"></div><div class="t12 gl" style="left:422px;top:504px">标签</div>
<div class="abs gb" style="left:416px;top:577px;width:179px;height:35px"></div><div class="t12 gl" style="left:422px;top:571px">形状</div>
<div class="abs gb" style="left:611px;top:511px;width:180px;height:56px"></div><div class="t12 gl" style="left:618px;top:504px">间距</div>
<div class="abs gb" style="left:614px;top:577px;width:177px;height:35px"></div><div class="t12 gl" style="left:621px;top:571px">孔洞</div>
<div class="abs gb" style="left:805px;top:511px;width:147px;height:100px"></div><div class="t12 gl" style="left:812px;top:504px">行列</div>
<!-- left group -->
<div class="t12" style="left:424px;top:520px"><span class="w2">宽度</span><span class="mn">(W):</span></div>
<div class="abs inp" style="left:475px;top:518px;width:71px;height:18px;border-color:#3d7bad #a4c9e3 #b7d9ed #b5cfe7"></div>
<div class="abs" style="left:507px;top:521px;width:36px;height:12px;background:#3397fb"></div>
<div class="t12 nm" style="left:507px;top:520px;color:#fff">100<i>.</i>00</div>
<div class="abs" style="left:543px;top:521px;width:1px;height:12px;background:#000"></div>
<div class="t12" style="left:554px;top:520px">毫米</div>
<div class="t12" style="left:424px;top:544px"><span class="w2">高度</span><span class="mn">(H):</span></div>
<div class="abs inp" style="left:475px;top:542px;width:71px;height:18px"></div>
<div class="t12 nm" style="left:513px;top:544px">80<i>.</i>00</div>
<div class="t12" style="left:554px;top:544px">毫米</div>
<div class="abs dd" style="left:424px;top:586px;width:158px;height:20px"></div>
<div class="t12" style="left:427px;top:589px">圆角矩形</div>
<svg style="left:570px;top:595px" width="7" height="4"><path d="M0 0h7l-3.500 4z" fill="#000"/></svg>
<!-- mid group -->
<div class="t12" style="left:620px;top:520px"><span class="w2">列距</span><span class="mn">(P):</span></div>
<div class="abs inp" style="left:671px;top:518px;width:71px;height:18px"></div>
<div class="t12 nm" style="left:715px;top:520px">3<i>.</i>00</div>
<div class="t12" style="left:751px;top:520px">毫米</div>
<div class="t12" style="left:620px;top:544px"><span class="w2">行距</span><span class="mn">(L):</span></div>
<div class="abs inp" style="left:671px;top:542px;width:71px;height:18px"></div>
<div class="t12 nm" style="left:715px;top:544px">3<i>.</i>00</div>
<div class="t12" style="left:751px;top:544px">毫米</div>
<div class="abs dd" style="left:626px;top:586px;width:78px;height:20px"></div>
<div class="t12" style="left:630px;top:589px">无</div>
<svg style="left:692px;top:595px" width="7" height="4"><path d="M0 0h7l-3.500 4z" fill="#000"/></svg>
<div class="abs" style="left:715px;top:586px;width:44px;height:18px;border:1px solid #b9bdc0;border-radius:2px;background:#f7f7f7"></div>
<div class="t12" style="left:763px;top:589px;color:#a5a5a5">毫米</div>
<!-- right group -->
<div class="t12" style="left:817px;top:525px"><span class="w2">列数</span><span class="mn">(C):</span></div>
<div class="abs inp" style="left:824px;top:542px;width:110px;height:18px;border-color:#abadb3 #abadb3 #b5b8bd #dfe3e8"></div>
<div class="t12 nm" style="left:909px;top:544px">1</div>
<div class="abs spin" style="left:917px;top:544px"><b></b></div>
<svg style="left:922px;top:546px" width="5" height="10" viewBox="0 0 5 10"><path d="M2.500 0l2.500 3h-5zM2.500 10l2.500-3h-5z" fill="#5a6496"/></svg>
<div class="t12" style="left:817px;top:566px"><span class="w2">行数</span><span class="mn">(R):</span></div>
<div class="abs inp" style="left:824px;top:584px;width:111px;height:18px;border-color:#abadb3 #abadb3 #b5b8bd #dfe3e8"></div>
<div class="t12 nm" style="left:910px;top:586px">1</div>
<div class="abs spin" style="left:918px;top:586px"><b></b></div>
<svg style="left:923px;top:588px" width="5" height="10" viewBox="0 0 5 10"><path d="M2.500 0l2.500 3h-5zM2.500 10l2.500-3h-5z" fill="#5a6496"/></svg>
<!-- buttons -->
<div class="abs btn" style="left:733px;top:636px;border-color:#3c7fb1;background:linear-gradient(#eef6fb,#e1eff8 48%,#cfe4f2 52%,#c2dcec);box-shadow:inset 0 0 0 1px #48d8fb,inset 0 0 0 2px #c5ecf9">确定</div>
<div class="abs btn" style="left:814px;top:636px">取消</div>
<div class="abs btn" style="left:895px;top:636px">帮助</div>
<!--/DLG-->
<!--CURSOR-->
<svg style="left:550px;top:531px" width="13" height="21" viewBox="0 0 13 21" ><path d="M.5 .5v16l3.700-3.500 2.600 6 2.200-1-2.600-5.800h5.100z" fill="#fff" stroke="#000" stroke-width="1" stroke-linejoin="miter"/></svg>
<!--/CURSOR-->
</body></html>
